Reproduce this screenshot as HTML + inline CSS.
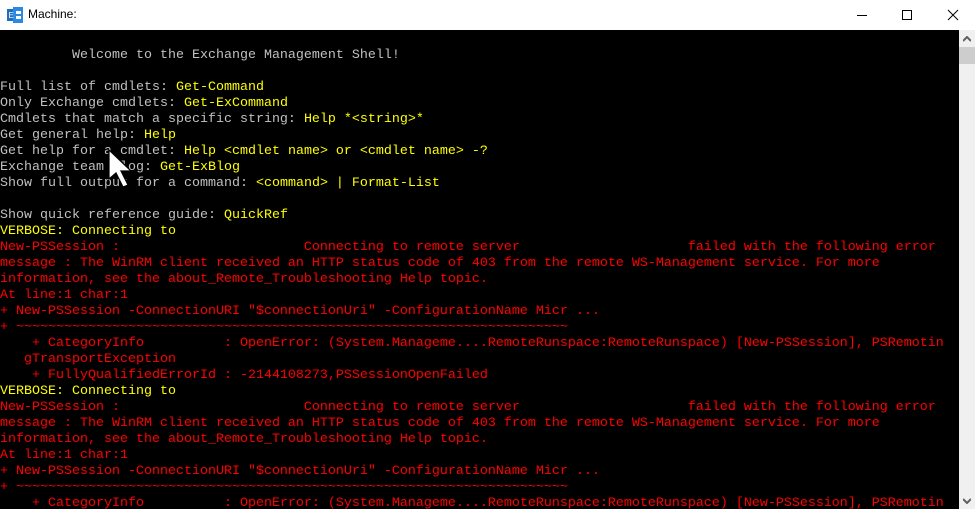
<!DOCTYPE html>
<html><head><meta charset="utf-8"><style>
body{margin:0;width:975px;height:509px;overflow:hidden;background:#fff;position:relative;font-family:"Liberation Sans",sans-serif}
#title{position:absolute;left:0;top:0;width:975px;height:30px;background:#fff}
#title .t{position:absolute;left:28px;top:7px;font-size:12px;color:#000}
#con{position:absolute;left:0;top:30px;width:959px;height:479px;background:#000;overflow:hidden}
pre{margin:0;padding-top:2px;font-family:"Liberation Mono",monospace;font-size:13.33px;line-height:16px;color:#c0c0c0;white-space:pre}
.y{color:#ffff00}.r{color:#ff0000}
#sb{position:absolute;left:959px;top:30px;width:16px;height:479px;background:#f0f0f0}
#thumb{position:absolute;left:0;top:17px;width:16px;height:17px;background:#cdcdcd}
</style></head><body>
<div id="title">
<svg style="position:absolute;left:7px;top:7px" width="16" height="16" viewBox="0 0 16 16"><rect x="0" y="2" width="9" height="12" fill="#1e6fc4"/><rect x="6" y="0" width="10" height="16" fill="#2b8ae0"/><text x="1.5" y="11" font-size="8" fill="#fff" font-family="Liberation Sans">E</text><rect x="9" y="4" width="5" height="3" fill="#fff"/><rect x="9" y="9" width="5" height="3" fill="#fff"/></svg>
<span class="t">Machine:</span>
<svg style="position:absolute;left:855px;top:9px" width="110" height="12"><line x1="2" y1="6.5" x2="12" y2="6.5" stroke="#000"/><rect x="47.5" y="1.5" width="9" height="9" fill="none" stroke="#000"/><path d="M93 1L103 11M103 1L93 11" stroke="#000"/></svg>
</div>
<div id="con"><pre>&#8203;
         Welcome to the Exchange Management Shell!

Full list of cmdlets: <span class="y">Get-Command</span>
Only Exchange cmdlets: <span class="y">Get-ExCommand</span>
Cmdlets that match a specific string: <span class="y">Help *&lt;string&gt;*</span>
Get general help: <span class="y">Help</span>
Get help for a cmdlet: <span class="y">Help &lt;cmdlet name&gt; or &lt;cmdlet name&gt; -?</span>
Exchange team blog: <span class="y">Get-ExBlog</span>
Show full output for a command: <span class="y">&lt;command&gt; | Format-List</span>

Show quick reference guide: <span class="y">QuickRef</span>
<span class="y">VERBOSE: Connecting to</span>
<span class="r">New-PSSession :                       Connecting to remote server                     failed with the following error
message : The WinRM client received an HTTP status code of 403 from the remote WS-Management service. For more
information, see the about_Remote_Troubleshooting Help topic.
At line:1 char:1
+ New-PSSession -ConnectionURI "$connectionUri" -ConfigurationName Micr ...
+ ~~~~~~~~~~~~~~~~~~~~~~~~~~~~~~~~~~~~~~~~~~~~~~~~~~~~~~~~~~~~~~~~~~~~~
    + CategoryInfo          : OpenError: (System.Manageme....RemoteRunspace:RemoteRunspace) [New-PSSession], PSRemotin
   gTransportException
    + FullyQualifiedErrorId : -2144108273,PSSessionOpenFailed</span>
<span class="y">VERBOSE: Connecting to</span>
<span class="r">New-PSSession :                       Connecting to remote server                     failed with the following error
message : The WinRM client received an HTTP status code of 403 from the remote WS-Management service. For more
information, see the about_Remote_Troubleshooting Help topic.
At line:1 char:1
+ New-PSSession -ConnectionURI "$connectionUri" -ConfigurationName Micr ...
+ ~~~~~~~~~~~~~~~~~~~~~~~~~~~~~~~~~~~~~~~~~~~~~~~~~~~~~~~~~~~~~~~~~~~~~
    + CategoryInfo          : OpenError: (System.Manageme....RemoteRunspace:RemoteRunspace) [New-PSSession], PSRemotin</span>
</pre></div>
<div id="sb"><div id="thumb"></div>
<svg style="position:absolute;left:4px;top:6px" width="8" height="6"><path d="M0 5L4 1L8 5" stroke="#606060" stroke-width="2" fill="none"/></svg>
<svg style="position:absolute;left:4px;top:468px" width="8" height="6"><path d="M0 1L4 5L8 1" stroke="#606060" stroke-width="2" fill="none"/></svg>
</div>
<svg style="position:absolute;left:108px;top:149px" width="30" height="42" viewBox="0 0 30 42"><path d="M1 1L1 30L8 24L15 38L20 36L13 22L23 22Z" fill="#fff" stroke="#000" stroke-width="1.2"/></svg>
</body></html>
